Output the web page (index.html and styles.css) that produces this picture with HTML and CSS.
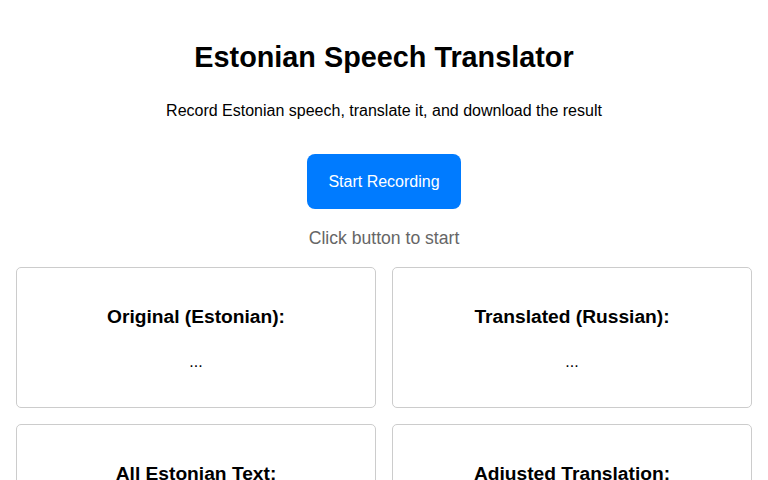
FILE: index.html
```html
<!DOCTYPE html>
<html>

<head>
    <title>Estonian Speech Translator</title>
    <link rel="stylesheet" href="styles.css">
</head>

<body>
    <div class="container">
        <h1>Estonian Speech Translator</h1>
        <p class="subtitle">Record Estonian speech, translate it, and download the result</p>

        <div class="controls">
            <button id="record-btn" class="record-btn">Start Recording</button>
            <p id="status" class="status">Click button to start</p>
        </div>

        <div class="results">
            <div class="result-box">
                <h3>Original (Estonian):</h3>
                <p id="original-text">...</p>
            </div>
            <div class="result-box">
                <h3>Translated (Russian):</h3>
                <p id="translated-text">...</p>
            </div>
            <div class="result-box">
                <h3>All Estonian Text:</h3>
                <p id="all-estonian">...</p>
            </div>
            <div class="result-box">
                <h3>Adjusted Translation:</h3>
                <p id="adjusted-translation">...</p>
            </div>
        </div>
    </div>
</body>

</html>
```

FILE: styles.css
```css
body {
    font-family: "Liberation Sans", Arial, sans-serif;
    margin: 0;
    color: #000;
    background: #fff;
}

.container {
    padding: 41px 16px 40px;
    text-align: center;
}

h1 {
    font-size: 28.8px;
    margin: 0 0 28px;
}

.subtitle {
    font-size: 16px;
    margin: 0 0 34px;
}

.record-btn {
    font-family: inherit;
    font-size: 16px;
    padding: 18.5px 21px;
    background-color: #007bff;
    color: #fff;
    border: none;
    border-radius: 8px;
    cursor: pointer;
}

.status {
    font-size: 17.6px;
    color: #666;
    margin: 19px 0 18px;
}

.results {
    display: grid;
    grid-template-columns: 1fr 1fr;
    gap: 16px;
}

.result-box {
    border: 1px solid #ccc;
    border-radius: 5px;
    padding: 20px;
    min-height: 99px;
}

.result-box h3 {
    font-size: 19.2px;
    margin: 18px 0 25px;
}

.result-box p {
    font-size: 16px;
    margin: 0;
}
```
